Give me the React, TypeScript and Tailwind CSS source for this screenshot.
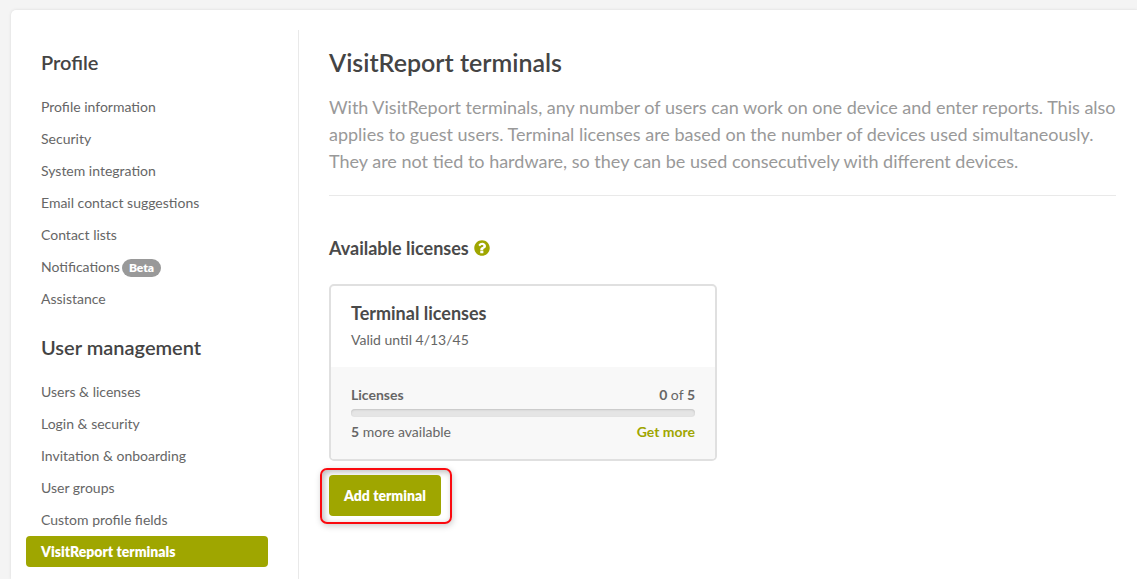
const profile = ["Profile information", "Security", "System integration", "Email contact suggestions", "Contact lists", "Notifications", "Assistance"];
const management = ["Users & licenses", "Login & security", "Invitation & onboarding", "User groups", "Custom profile fields", "VisitReport terminals"];

function Section({ title, items }: { title: string; items: string[] }) {
  return (
    <section>
      <h2 className="mb-[15px] px-[15px] text-[20px] font-semibold leading-7 text-[#444]">{title}</h2>
      <ul>
        {items.map((item) => (
          <li key={item} className="mb-px">
            <a
              href="#"
              className={
                item === "VisitReport terminals"
                  ? "block rounded-[4px] bg-[#9fa600] px-[15px] text-[14px] font-extrabold leading-[31px] text-white"
                  : "block px-[15px] text-[14px] leading-[31px]"
              }
            >
              {item}
              {item === "Notifications" && (
                <span className="ml-[2px] inline-block rounded-full bg-[#999] px-[7px] text-[12px] font-extrabold leading-[18px] text-white">Beta</span>
              )}
            </a>
          </li>
        ))}
      </ul>
    </section>
  );
}

export default function App() {
  return (
    <div className="min-h-screen bg-[#f4f4f4] pl-[11px] pt-[10px] font-['Lato',sans-serif] text-[#666]">
      <div className="flex min-h-[calc(100vh-10px)] rounded-tl-[5px] bg-white pt-5 shadow-[0_0_3px_#d8d8d8]">
        <nav aria-label="Settings" className="w-[288px] shrink-0 border-r border-[#e9e9e9] pl-[15px] pr-[30px] pt-[18px]">
          <Section title="Profile" items={profile} />
          <div className="h-[18px]" />
          <Section title="User management" items={management} />
        </nav>
        <main className="min-w-0 flex-1 pl-[30px] pr-[21px] pt-4">
          <h1 className="text-[25px] font-semibold leading-8 text-[#444]">VisitReport terminals</h1>
          <p className="mt-4 border-b border-[#e9e9e9] pb-5 text-[18px] leading-[27px] text-[#999]">
            With VisitReport terminals, any number of users can work on one device and enter reports. This also applies to guest users. Terminal licenses are based on the number of devices used simultaneously. They are not tied to hardware, so they can be used consecutively with different devices.
          </p>
          <h2 className="mt-[38px] flex items-center gap-[5px] text-[18px] font-bold leading-7 text-[#4a4a4a]">
            Available licenses
            <svg viewBox="0 0 512 512" className="size-4 fill-[#9fa600]" role="img" aria-label="Help"><path d="M504 256c0 136.997-111.043 248-248 248S8 392.997 8 256C8 119.083 119.043 8 256 8s248 111.083 248 248zM262.655 90c-54.497 0-89.255 22.957-116.549 63.758-3.536 5.286-2.353 12.415 2.715 16.258l34.699 26.31c5.205 3.947 12.621 3.008 16.665-2.122 17.864-22.658 30.113-35.797 57.303-35.797 20.429 0 45.698 13.148 45.698 32.958 0 14.976-12.363 22.667-32.534 33.976C247.128 238.528 200 254.941 200 296v8c0 6.627 5.373 12 12 12h76c6.627 0 12-5.373 12-12v-5.333c0-28.462 83.186-29.647 83.186-106.667 0-58.002-60.165-102-120.531-102zM212 336c-6.627 0-12 5.373-12 12v64c0 6.627 5.373 12 12 12h76c6.627 0 12-5.373 12-12v-64c0-6.627-5.373-12-12-12z" /></svg>
          </h2>
          <section className="mt-[22px] max-w-[388px] overflow-hidden rounded-[5px] border-2 border-[#e0e0e0]">
            <header className="px-5 pb-[15px] pt-[13px]">
              <h3 className="mb-px text-[18px] font-bold leading-7 text-[#4a4a4a]">Terminal licenses</h3>
              <p className="text-[14px] leading-6">Valid until 4/13/45</p>
            </header>
            <div className="bg-[#f8f8f8] px-5 pb-[17px] pt-[18px] text-[14px] leading-5">
              <div className="flex justify-between"><strong>Licenses</strong><span><strong>0</strong> of <strong>5</strong></span></div>
              <div role="progressbar" aria-label="Licenses used" aria-valuenow={0} aria-valuemax={5} className="mb-[5px] mt-1 h-2 rounded-full bg-[#e5e5e5] shadow-[inset_0_1px_2px_#c4c4c4]" />
              <div className="flex justify-between"><span><strong>5</strong> more available</span><a href="#" className="font-bold text-[#9fa600]">Get more</a></div>
            </div>
          </section>
          <div className="-ml-[9px] mt-[7px] w-fit rounded-[7px] border-2 border-[#fa0a0f] pb-[6px] pl-[7px] pr-[9px] pt-[5px] shadow-[1px_2px_6px_#ccc,inset_2px_2px_6px_#bbb]">
            <button type="button" className="block h-[41px] rounded-[4px] bg-[#9fa600] px-[15px] text-[14px] font-extrabold text-white">Add terminal</button>
          </div>
        </main>
      </div>
    </div>
  );
}
